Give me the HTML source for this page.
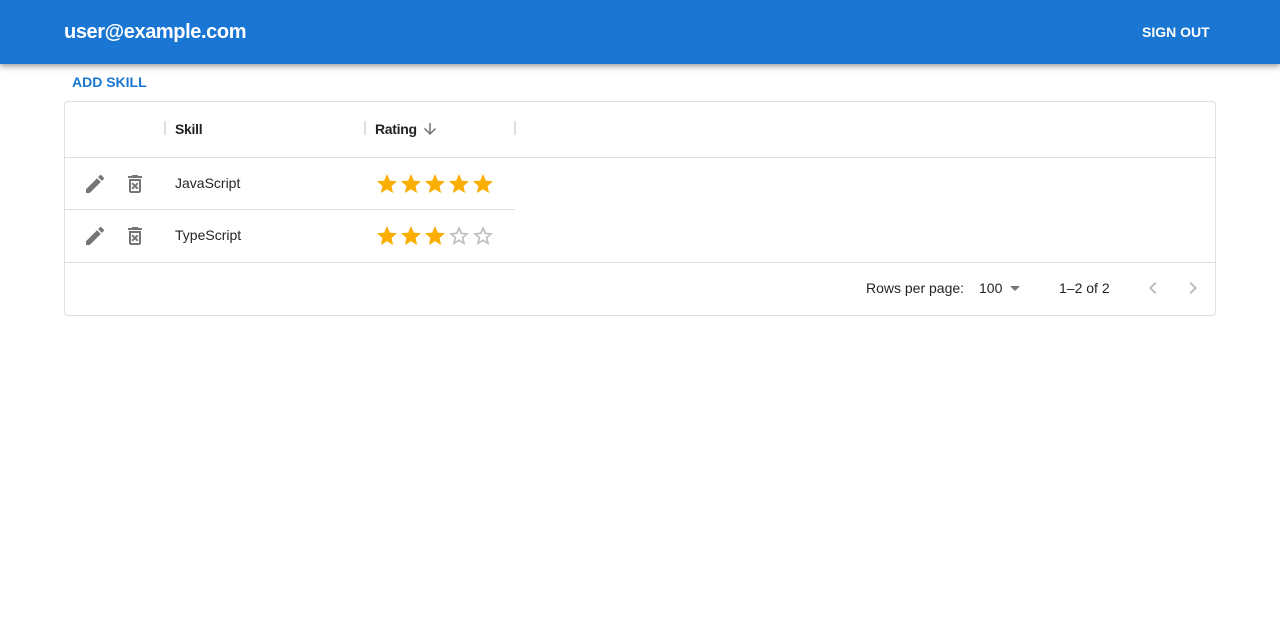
<!DOCTYPE html>
<html><head><style>
*{margin:0;padding:0;box-sizing:border-box}
body{width:1280px;height:640px;background:#fff;font-family:"Liberation Sans",sans-serif;position:relative;overflow:hidden;color:rgba(0,0,0,.87)}
.bar{position:absolute;left:0;top:0;width:1280px;height:64px;background:#1976d2;box-shadow:0 2px 4px -1px rgba(0,0,0,.2),0 4px 5px 0 rgba(0,0,0,.14),0 1px 10px 0 rgba(0,0,0,.12)}
.abs{position:absolute;white-space:nowrap}
.card{position:absolute;left:64px;top:101px;width:1152px;height:215px;border:1px solid #e0e0e0;border-radius:4px}
.hl{position:absolute;height:1px;background:#e0e0e0}
.sep{position:absolute;width:2px;height:14px;background:#e0e0e0;top:121px}
svg{position:absolute}
.t{font-size:14px}
</style></head><body>
<div class="bar"></div>
<div class="abs" style="left:64px;top:21px;font-size:20px;font-weight:bold;color:#fff;letter-spacing:-0.4px">user@example.com</div>
<div class="abs" style="left:1142px;top:24px;font-size:14px;font-weight:bold;color:#fff;letter-spacing:0">SIGN OUT</div>
<div class="abs" style="left:72px;top:74px;font-size:14px;font-weight:bold;color:#1976d2;letter-spacing:0">ADD SKILL</div>
<div class="card"></div>
<div class="hl" style="left:65px;top:157px;width:1150px"></div>
<div class="hl" style="left:65px;top:209px;width:450px"></div>
<div class="hl" style="left:65px;top:262px;width:1150px"></div>
<div class="sep" style="left:164px"></div>
<div class="sep" style="left:364px"></div>
<div class="sep" style="left:514px"></div>
<div class="abs t" style="left:175px;top:121px;font-weight:bold;letter-spacing:-0.3px">Skill</div>
<div class="abs t" style="left:375px;top:121px;font-weight:bold;letter-spacing:-0.3px">Rating</div>
<svg style="left:421px;top:120px" width="18" height="18" viewBox="0 0 24 24"><path fill="#757575" d="M20 12l-1.41-1.41L13 16.17V4h-2v12.17l-5.58-5.59L4 12l8 8 8-8z"/></svg>
<div class="abs t" style="left:175px;top:175px">JavaScript</div>
<div class="abs t" style="left:175px;top:227px">TypeScript</div>
<svg style="left:83px;top:172px" width="24" height="24" viewBox="0 0 24 24"><path fill="#757575" d="M3 17.25V21h3.75L17.81 9.94l-3.75-3.75L3 17.25zM20.71 7.04c.39-.39.39-1.02 0-1.41l-2.34-2.34a.9959.9959 0 0 0-1.41 0l-1.83 1.83 3.75 3.75 1.83-1.83z"/></svg>
<svg style="left:123px;top:172px" width="24" height="24" viewBox="0 0 24 24"><path fill="#757575" d="M14.12 10.47 12 12.59l-2.13-2.12-1.41 1.41L10.59 14l-2.12 2.12 1.41 1.41L12 15.41l2.12 2.12 1.41-1.41L13.41 14l2.12-2.12zM15.5 4l-1-1h-5l-1 1H5v2h14V4zM6 19c0 1.1.9 2 2 2h8c1.1 0 2-.9 2-2V7H6v12zM8 9h8v10H8V9z"/></svg>
<svg style="left:83px;top:224px" width="24" height="24" viewBox="0 0 24 24"><path fill="#757575" d="M3 17.25V21h3.75L17.81 9.94l-3.75-3.75L3 17.25zM20.71 7.04c.39-.39.39-1.02 0-1.41l-2.34-2.34a.9959.9959 0 0 0-1.41 0l-1.83 1.83 3.75 3.75 1.83-1.83z"/></svg>
<svg style="left:123px;top:224px" width="24" height="24" viewBox="0 0 24 24"><path fill="#757575" d="M14.12 10.47 12 12.59l-2.13-2.12-1.41 1.41L10.59 14l-2.12 2.12 1.41 1.41L12 15.41l2.12 2.12 1.41-1.41L13.41 14l2.12-2.12zM15.5 4l-1-1h-5l-1 1H5v2h14V4zM6 19c0 1.1.9 2 2 2h8c1.1 0 2-.9 2-2V7H6v12zM8 9h8v10H8V9z"/></svg>
<svg style="left:375px;top:172px" width="120" height="24" viewBox="0 0 120 24">
<g fill="#faaf00">
<path d="M12 17.27 18.18 21l-1.64-7.03L22 9.24l-7.19-.61L12 2 9.19 8.63 2 9.24l5.46 4.73L5.82 21z"/>
<path transform="translate(24)" d="M12 17.27 18.18 21l-1.64-7.03L22 9.24l-7.19-.61L12 2 9.19 8.63 2 9.24l5.46 4.73L5.82 21z"/>
<path transform="translate(48)" d="M12 17.27 18.18 21l-1.64-7.03L22 9.24l-7.19-.61L12 2 9.19 8.63 2 9.24l5.46 4.73L5.82 21z"/>
<path transform="translate(72)" d="M12 17.27 18.18 21l-1.64-7.03L22 9.24l-7.19-.61L12 2 9.19 8.63 2 9.24l5.46 4.73L5.82 21z"/>
<path transform="translate(96)" d="M12 17.27 18.18 21l-1.64-7.03L22 9.24l-7.19-.61L12 2 9.19 8.63 2 9.24l5.46 4.73L5.82 21z"/>
</g></svg>
<svg style="left:375px;top:224px" width="120" height="24" viewBox="0 0 120 24">
<g fill="#faaf00">
<path d="M12 17.27 18.18 21l-1.64-7.03L22 9.24l-7.19-.61L12 2 9.19 8.63 2 9.24l5.46 4.73L5.82 21z"/>
<path transform="translate(24)" d="M12 17.27 18.18 21l-1.64-7.03L22 9.24l-7.19-.61L12 2 9.19 8.63 2 9.24l5.46 4.73L5.82 21z"/>
<path transform="translate(48)" d="M12 17.27 18.18 21l-1.64-7.03L22 9.24l-7.19-.61L12 2 9.19 8.63 2 9.24l5.46 4.73L5.82 21z"/>
</g><g fill="#bdbdbd">
<path transform="translate(72)" d="M22 9.24l-7.19-.62L12 2 9.19 8.63 2 9.24l5.46 4.73L5.82 21 12 17.27 18.18 21l-1.63-7.03L22 9.24zM12 15.4l-3.76 2.27 1-4.28-3.32-2.88 4.38-.38L12 6.1l1.71 4.04 4.38.38-3.32 2.88 1 4.28L12 15.4z"/>
<path transform="translate(96)" d="M22 9.24l-7.19-.62L12 2 9.19 8.63 2 9.24l5.46 4.73L5.82 21 12 17.27 18.18 21l-1.63-7.03L22 9.24zM12 15.4l-3.76 2.27 1-4.28-3.32-2.88 4.38-.38L12 6.1l1.71 4.04 4.38.38-3.32 2.88 1 4.28L12 15.4z"/>
</g></svg>
<div class="abs t" style="left:866px;top:280px">Rows per page:</div>
<div class="abs t" style="left:979px;top:280px">100</div>
<svg style="left:1003px;top:276px" width="24" height="24" viewBox="0 0 24 24"><path fill="#757575" d="M7 10l5 5 5-5z"/></svg>
<div class="abs t" style="left:1059px;top:280px">1–2 of 2</div>
<svg style="left:1141px;top:276px" width="24" height="24" viewBox="0 0 24 24"><path fill="#bdbdbd" d="M15.41 7.41 14 6l-6 6 6 6 1.41-1.41L10.83 12z"/></svg>
<svg style="left:1181px;top:276px" width="24" height="24" viewBox="0 0 24 24"><path fill="#bdbdbd" d="M10 6 8.59 7.41 13.17 12l-4.58 4.59L10 18l6-6z"/></svg>
</body></html>
